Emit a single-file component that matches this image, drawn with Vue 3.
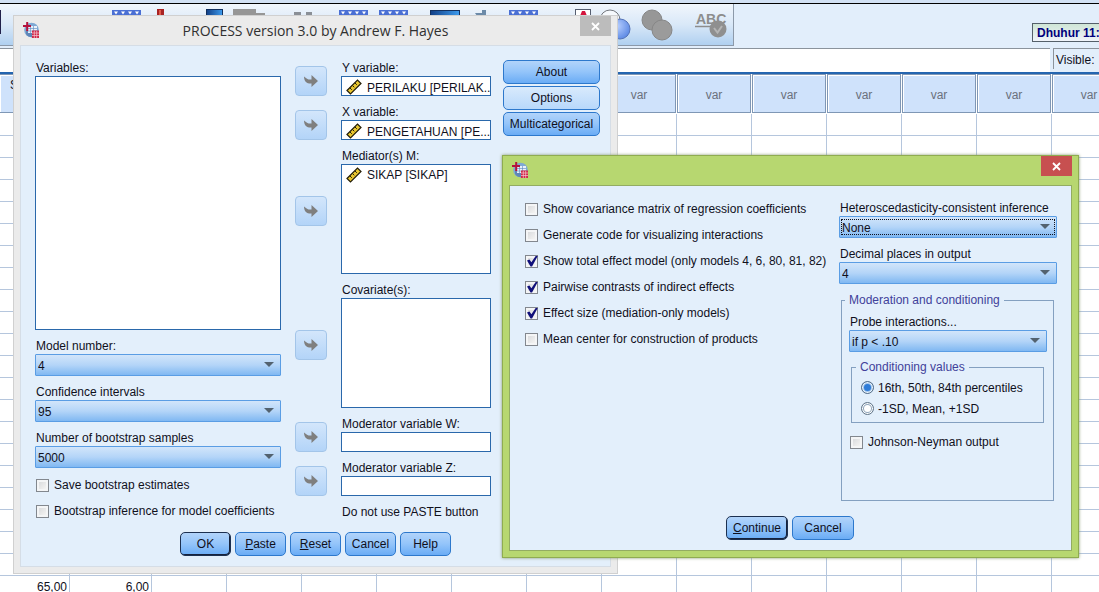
<script setup>
import { reactive, ref } from "vue";

const rowCount = 22;
const varColumns = 13;

const modelNumber = ref("4");
const confidence = ref("95");
const samples = ref("5000");
const hcInference = ref("None");
const decimals = ref("4");
const probe = ref("if p < .10");
const conditioning = ref("percentiles");
const johnsonNeyman = ref(false);

const bootstrap = reactive([
  { id: "save", label: "Save bootstrap estimates", on: false },
  { id: "infer", label: "Bootstrap inference for model coefficients", on: false },
]);

const targets = [
  { id: "y", label: "Y variable:", kind: "field", value: "PERILAKU [PERILAK.." },
  { id: "x", label: "X variable:", kind: "field", value: "PENGETAHUAN [PE..." },
  { id: "m", label: "Mediator(s) M:", kind: "list", items: ["SIKAP [SIKAP]"] },
  { id: "cov", label: "Covariate(s):", kind: "list", items: [] },
  { id: "w", label: "Moderator variable W:", kind: "field", value: "" },
  { id: "z", label: "Moderator variable Z:", kind: "field", value: "" },
];

const options = reactive([
  { id: "cov", label: "Show covariance matrix of regression coefficients", on: false },
  { id: "code", label: "Generate code for visualizing interactions", on: false },
  { id: "total", label: "Show total effect model (only models 4, 6, 80, 81, 82)", on: true },
  { id: "pair", label: "Pairwise contrasts of indirect effects", on: true },
  { id: "effect", label: "Effect size (mediation-only models)", on: true },
  { id: "center", label: "Mean center for construction of products", on: false },
]);
</script>

<template>
  <div class="editor">
    <svg width="0" height="0" class="defs" aria-hidden="true">
      <defs>
        <linearGradient id="blueFill" x1="0" y1="0" x2="1" y2="0">
          <stop offset="0" stop-color="#123f86" />
          <stop offset="1" stop-color="#3d9bee" />
        </linearGradient>
        <radialGradient id="ballFill" cx="0.35" cy="0.35" r="0.8">
          <stop offset="0" stop-color="#b9d0ff" />
          <stop offset="1" stop-color="#4f7fe0" />
        </radialGradient>
        <symbol id="spss" viewBox="0 0 16 16">
          <circle cx="8.5" cy="8" r="7.3" fill="#7fa9d4" />
          <path d="M3 12a7.3 7.3 0 0 0 7 3.2V9H3z" fill="#5f86b8" />
          <rect x="5" y="4" width="9" height="7" fill="#e8f1fa" />
          <path d="M5 6.5h9M5 9h9M7.5 4v7M10.5 4v7" stroke="#5b86bd" stroke-width="0.6" />
          <path d="M4.2 0v9M0 4h8" stroke="#b5123c" stroke-width="2" />
          <rect x="9" y="8.5" width="7" height="7.5" fill="#d02747" />
          <path d="M9 11h7M9 13.5h7M11.3 9v7M13.7 9v7" stroke="#f6c8d2" stroke-width="0.7" />
        </symbol>
        <symbol id="ruler" viewBox="0 0 16 16">
          <path d="M1 11.5L11.5 1l3.500 3.500L4.500 15z" fill="#e9c62f" stroke="#221c08" stroke-width="1.2" />
          <path d="M4 9l1.800 1.800M6.500 6.500l1.800 1.800M9 4l1.800 1.800" stroke="#221c08" stroke-width="1" />
        </symbol>
        <symbol id="arrow" viewBox="0 0 14 12">
          <path d="M0 1.5l3 2.200c1.500 1 3 1 4.500.8V0L14 6l-6.500 6V8.500C3.500 8.800.3 7.500 0 1.500z" fill="#7f7f7f" />
        </symbol>
        <symbol id="gridIcon" viewBox="0 0 29 6">
          <rect width="29" height="6" fill="#4a6fd4" />
          <path d="M2 1.5h4l-2 3zM9 1.5h4l-2 3zM16 1.5h4l-2 3zM23 1.5h4l-2 3z" fill="#fff" />
          <path d="M0 5.5h29" stroke="#9db4ea" />
        </symbol>
      </defs>
    </svg>

    <div class="toolbar-row">
      <div class="toolbar">
        <svg width="733" height="41" viewBox="0 4 733 41" aria-hidden="true">
          <rect x="0" y="10" width="1" height="24" fill="#20204a" />
          <use href="#gridIcon" x="112" y="10" width="29" height="6" />
          <rect x="157" y="9" width="7" height="8" fill="#a82323" />
          <rect x="159" y="10" width="2" height="7" fill="#e05a4a" />
          <rect x="206.5" y="9.5" width="16" height="8" fill="url(#blueFill)" stroke="#12305f" />
          <path d="M233 9h23v4h9v5h-32z" fill="#969696" />
          <path d="M294 12h7v5h-7zM306 12h6v5h-6z" fill="#8a8f96" />
          <use href="#gridIcon" x="339" y="10" width="29" height="6" />
          <use href="#gridIcon" x="379" y="10" width="29" height="6" />
          <rect x="430.5" y="10.5" width="29" height="8" fill="url(#blueFill)" stroke="#12305f" />
          <path d="M475 13h7v-3h4v6h-9z" fill="#6c8aa8" />
          <use href="#gridIcon" x="509" y="10" width="29" height="6" />
          <rect x="575.5" y="9.5" width="15" height="10" fill="#fff" stroke="#555e70" />
          <path d="M580 16l2-5h3l2 5" fill="#d4143c" />
          <circle cx="610" cy="20" r="10" fill="#f6f9fd" stroke="#73777d" />
          <circle cx="620" cy="29" r="10" fill="url(#ballFill)" stroke="#5473b8" />
          <circle cx="652" cy="20" r="10" fill="#979797" stroke="#878787" />
          <circle cx="662" cy="30" r="10" fill="#9b9b9b" stroke="#878787" />
          <text x="696" y="24" class="abc">ABC</text>
          <path d="M695 26.5h20" stroke="#8d8d8d" stroke-width="1.5" />
          <circle cx="718" cy="29" r="8.5" fill="#8f8f8f" />
          <path d="M714 28l3.5 4.5L722 26" fill="none" stroke="#b4b4b4" stroke-width="2" />
        </svg>
      </div>
      <div class="prayer">Dhuhur 11:4</div>
    </div>

    <div class="cell-row">
      <div class="cell-editor"></div>
      <div class="visible">Visible:</div>
    </div>

    <table class="sheet">
      <colgroup>
        <col class="col-first" />
        <col class="col-second" />
        <col v-for="n in varColumns" :key="n" class="col-var" />
      </colgroup>
      <thead>
        <tr>
          <th><div class="head head--named">S</div></th>
          <th><div class="head"></div></th>
          <th v-for="n in varColumns" :key="n"><div class="head">var</div></th>
        </tr>
      </thead>
      <tbody>
        <tr v-for="r in rowCount" :key="r">
          <td>{{ r === rowCount ? "65,00" : "" }}</td>
          <td>{{ r === rowCount ? "6,00" : "" }}</td>
          <td v-for="n in varColumns" :key="n"></td>
        </tr>
      </tbody>
    </table>

    <section class="window window--process" aria-label="PROCESS version 3.0 by Andrew F. Hayes">
      <header class="titlebar">
        <svg class="app-icon" width="16" height="16"><use href="#spss" /></svg>
        <h1 class="title">PROCESS version 3.0 by Andrew F. Hayes</h1>
        <button class="close" type="button" aria-label="Close">
          <svg width="9" height="9" viewBox="0 0 9 9"><path d="M1 1l7 7M8 1L1 8" stroke="#fff" stroke-width="1.8" /></svg>
        </button>
      </header>
      <div class="body">
        <div class="columns">
          <div class="stack stack--left">
            <div class="group">
              <span id="vars-label" class="label">Variables:</span>
              <ul class="list list--tall" aria-labelledby="vars-label"></ul>
            </div>
            <div class="group">
              <label class="label" for="model">Model number:</label>
              <div class="combo">
                <select id="model" v-model="modelNumber"><option>4</option></select>
              </div>
            </div>
            <div class="group">
              <label class="label" for="conf">Confidence intervals</label>
              <div class="combo">
                <select id="conf" v-model="confidence"><option>95</option></select>
              </div>
            </div>
            <div class="group">
              <label class="label" for="samples">Number of bootstrap samples</label>
              <div class="combo">
                <select id="samples" v-model="samples"><option>5000</option></select>
              </div>
            </div>
            <label v-for="b in bootstrap" :key="b.id" class="check">
              <input v-model="b.on" type="checkbox" />
              <span>{{ b.label }}</span>
            </label>
          </div>

          <div class="stack stack--targets">
            <div v-for="t in targets" :key="t.id" class="target" :class="`target--${t.kind}`">
              <button class="move" type="button" :aria-label="`Move to ${t.label}`">
                <svg width="14" height="12"><use href="#arrow" /></svg>
              </button>
              <div class="group group--grow">
                <label class="label" :for="`target-${t.id}`">{{ t.label }}</label>
                <div v-if="t.kind === 'field'" class="field">
                  <svg v-if="t.value" width="16" height="16"><use href="#ruler" /></svg>
                  <input :id="`target-${t.id}`" type="text" :value="t.value" readonly />
                </div>
                <ul v-else :id="`target-${t.id}`" class="list">
                  <li v-for="item in t.items" :key="item">
                    <svg width="16" height="16"><use href="#ruler" /></svg>
                    <span>{{ item }}</span>
                  </li>
                </ul>
              </div>
            </div>
            <p class="note">Do not use PASTE button</p>
          </div>

          <div class="side">
            <button class="btn" type="button">About</button>
            <button class="btn btn--hover" type="button">Options</button>
            <button class="btn" type="button">Multicategorical</button>
          </div>
        </div>
        <div class="actions">
          <button class="btn btn--default" type="button">OK</button>
          <button class="btn" type="button"><u>P</u>aste</button>
          <button class="btn" type="button"><u>R</u>eset</button>
          <button class="btn" type="button">Cancel</button>
          <button class="btn" type="button">Help</button>
        </div>
      </div>
    </section>

    <section class="window window--options" aria-label="Options">
      <header class="titlebar">
        <svg class="app-icon" width="16" height="16"><use href="#spss" /></svg>
        <span class="title"></span>
        <button class="close" type="button" aria-label="Close">
          <svg width="9" height="9" viewBox="0 0 9 9"><path d="M1 1l7 7M8 1L1 8" stroke="#fff" stroke-width="1.8" /></svg>
        </button>
      </header>
      <div class="body">
        <div class="columns columns--options">
          <div class="stack">
            <label v-for="o in options" :key="o.id" class="check">
              <input v-model="o.on" type="checkbox" />
              <span>{{ o.label }}</span>
            </label>
          </div>
          <div class="stack stack--settings">
            <div class="group">
              <label class="label" for="hc">Heteroscedasticity-consistent inference</label>
              <div class="combo combo--focus">
                <select id="hc" v-model="hcInference"><option>None</option></select>
              </div>
            </div>
            <div class="group">
              <label class="label" for="decimals">Decimal places in output</label>
              <div class="combo">
                <select id="decimals" v-model="decimals"><option>4</option></select>
              </div>
            </div>
            <fieldset class="frame">
              <legend>Moderation and conditioning</legend>
              <div class="group">
                <label class="label" for="probe">Probe interactions...</label>
                <div class="combo">
                  <select id="probe" v-model="probe"><option>if p &lt; .10</option></select>
                </div>
              </div>
              <fieldset class="frame frame--inner">
                <legend>Conditioning values</legend>
                <label class="check">
                  <input v-model="conditioning" type="radio" name="conditioning" value="percentiles" />
                  <span>16th, 50th, 84th percentiles</span>
                </label>
                <label class="check">
                  <input v-model="conditioning" type="radio" name="conditioning" value="sd" />
                  <span>-1SD, Mean, +1SD</span>
                </label>
              </fieldset>
              <label class="check">
                <input v-model="johnsonNeyman" type="checkbox" />
                <span>Johnson-Neyman output</span>
              </label>
            </fieldset>
          </div>
        </div>
        <div class="actions actions--wide">
          <button class="btn btn--default" type="button"><u>C</u>ontinue</button>
          <button class="btn" type="button">Cancel</button>
        </div>
      </div>
    </section>
  </div>
</template>

<style>
body {
  margin: 0;
  overflow: hidden;
}
</style>

<style scoped>
.editor,
.editor * {
  box-sizing: border-box;
}
.editor {
  position: relative;
  height: 100vh;
  overflow: hidden;
  background: #e2eefb;
  border-top: 3px solid #d2e1f4;
  color: #10101c;
  font: 12px/16px "Liberation Sans", Arial, sans-serif;
}
.defs {
  position: absolute;
}
.editor svg {
  flex: none;
}
.editor button,
.editor input,
.editor select {
  margin: 0;
  font: inherit;
  color: inherit;
}

/* data editor behind the dialogs */
.toolbar-row {
  display: flex;
  align-items: flex-start;
  justify-content: space-between;
  height: 45px;
  border-top: 1px solid #000;
}
.toolbar {
  height: 42px;
  overflow: hidden;
  border-right: 1px solid #8c99a9;
  border-bottom: 1px solid #8c99a9;
  background: linear-gradient(#f1f6fc, #d9e8f8 50%, #b0d0f0);
}
.abc {
  font: bold 14px "Liberation Sans", Arial, sans-serif;
  fill: #8d8d8d;
}
.prayer {
  width: 67px;
  height: 19px;
  margin-top: 19px;
  padding-left: 4px;
  overflow: hidden;
  border: 1px solid #55606a;
  border-right: 0;
  background: linear-gradient(#cfe6d6, #f0f4fb);
  color: #00007c;
  font-weight: bold;
  line-height: 19px;
  white-space: nowrap;
}
.cell-row {
  display: flex;
  gap: 3px;
  height: 26px;
  border-bottom: 2px solid #2465b0;
}
.cell-editor {
  flex: 1;
  border-top: 1px solid #8b939c;
  background: #fff;
}
.visible {
  width: 46px;
  height: 21px;
  padding-left: 2px;
  border-top: 1px solid #8b939c;
  border-left: 1px solid #8b939c;
  line-height: 22px;
}
.sheet {
  width: 1127px;
  table-layout: fixed;
  border-collapse: separate;
  border-spacing: 0;
  background: #fff;
}
.col-first {
  width: 70px;
}
.col-second {
  width: 82px;
}
.col-var {
  width: 75px;
}
.sheet th {
  height: 40px;
  padding: 0 1px 1px 0;
  font-weight: normal;
}
.head {
  height: 39px;
  border: 1px solid #7f97b5;
  background: #cfe2fb;
  box-shadow: inset 1px 1px #fff;
  color: #6b717b;
  line-height: 40px;
  text-align: center;
}
.head--named {
  padding-left: 10px;
  border-left: 0;
  color: #10101c;
  line-height: 20px;
  text-align: left;
}
.sheet td {
  height: 22px;
  padding: 0 2px 0 0;
  border-right: 1px solid #b5c6dd;
  border-bottom: 1px solid #b5c6dd;
  text-align: right;
}

/* dialog windows */
.window {
  position: absolute;
  display: flex;
  flex-direction: column;
  padding: 0 6px 6px;
}
.window--process {
  top: 12px;
  left: 13px;
  width: 605px;
  border: 1px solid #d0d0d0;
  background: #ebebeb;
}
.window--options {
  top: 152px;
  left: 502px;
  width: 577px;
  border: 1px solid #8fac50;
  background: #b7d770;
  box-shadow: 0 0 3px #8a9a72;
}
.titlebar {
  display: flex;
  align-items: flex-start;
  height: 29px;
}
.app-icon {
  margin: 6px 0 0 3px;
}
.title {
  flex: 1;
  margin: 0;
  padding-left: 12px;
  color: #303030;
  font: 14px/30px "Open Sans", "Noto Sans", sans-serif;
  text-align: center;
}
.close {
  display: flex;
  align-items: center;
  justify-content: center;
  width: 31px;
  height: 20px;
  padding: 0;
  border: 0;
  background: #bcbcbc;
}
.window--options .close {
  background: #c75050;
}
.body {
  padding: 14px 10px 10px 14px;
  border: 1px solid #d5dde6;
  background: #e3effb;
}
.window--options .body {
  padding-right: 14px;
  border-color: #93ac62;
}
.columns {
  display: flex;
  gap: 12px;
}
.columns--options {
  justify-content: space-between;
}
.stack {
  display: flex;
  flex-direction: column;
  gap: 8px;
}
.stack--left {
  flex: none;
  width: 246px;
}
.stack--targets {
  flex: 1;
  min-width: 0;
}
.stack--settings {
  width: 218px;
}
.group--grow {
  flex: 1;
  min-width: 0;
}
.label {
  display: block;
  height: 16px;
  padding-left: 1px;
  white-space: nowrap;
}
.list {
  height: 110px;
  margin: 0;
  padding: 2px 4px;
  border: 1px solid #2a68ab;
  background: #fff;
  list-style: none;
}
.list--tall {
  height: 254px;
}
.list li {
  display: flex;
  gap: 5px;
}
.target {
  display: flex;
  gap: 14px;
  padding-left: 2px;
}
.target--field {
  align-items: flex-end;
}
.target--list {
  align-items: center;
}
.field {
  display: flex;
  gap: 5px;
  height: 20px;
  padding: 2px 0 0 4px;
  border: 1px solid #2a68ab;
  background: #fff;
}
.editor .field input {
  flex: 1;
  min-width: 0;
  height: 17px;
  padding: 0;
  border: 0;
  outline: 0;
  background: transparent;
}
.move {
  display: flex;
  flex: none;
  align-items: center;
  justify-content: center;
  width: 32px;
  height: 30px;
  padding: 0;
  border: 1px solid #a3c5e9;
  border-radius: 4px;
  background: linear-gradient(#d3e6fb, #b3d4f8);
}
.note {
  margin: 0 0 0 49px;
}
.combo {
  position: relative;
}
.editor .combo select {
  display: block;
  width: 100%;
  height: 22px;
  padding: 2px 2px 0;
  appearance: none;
  border: 1px solid #5a9de4;
  border-radius: 1px;
  outline: 0;
  background: linear-gradient(#d2e5fa, #b4d5f8 50%, #80b8f2);
}
.combo::after {
  content: "";
  position: absolute;
  top: 8px;
  right: 7px;
  border: 5px solid transparent;
  border-top-color: #53626f;
  border-bottom: 0;
  pointer-events: none;
}
.combo--focus::before {
  content: "";
  position: absolute;
  inset: 3px 2px;
  border: 1px dotted #10101c;
  pointer-events: none;
}
.check {
  display: flex;
  align-items: center;
  gap: 5px;
  height: 18px;
  padding-left: 1px;
  white-space: nowrap;
}
.check input {
  position: relative;
  flex: none;
  width: 13px;
  height: 13px;
  appearance: none;
  border: 1px solid #82878e;
  background: linear-gradient(135deg, #d3d5d8, #fbfaf8);
  box-shadow: inset 0 0 0 2px #f4f5f6;
}
.check input[type="checkbox"]:checked::before {
  content: "";
  position: absolute;
  inset: 0 -1px 0 1px;
  background: #10107a;
  clip-path: polygon(0 45%, 22% 36%, 40% 62%, 82% 0, 100% 0, 46% 100%, 32% 100%);
}
.frame {
  min-width: 0;
  height: 209px;
  margin: 0 3px 0 2px;
  padding: 6px 6px 0 7px;
  border: 1px solid #84a0c0;
}
.frame legend {
  height: 16px;
  margin-left: -4px;
  padding: 0 4px;
  color: #41419a;
}
.frame > .check {
  margin-top: 10px;
}
.frame--inner {
  height: 64px;
  margin: 7px 3px 0 2px;
  padding: 2px 8px 0;
}
.frame--inner > .check {
  gap: 4px;
  height: 21px;
  margin: 0;
}
.frame--inner input {
  border-radius: 50%;
  border-color: #5d7287;
  background: #fff;
  box-shadow: inset 0 0 0 1px #fff, inset 0 0 0 2px #8fa5bb;
}
.frame--inner input:checked {
  background: #2f7cd8;
  box-shadow: inset 0 0 0 1px #eaf3fc, inset 0 0 0 2px #9fc4ec;
}
.side {
  display: flex;
  flex: none;
  flex-direction: column;
  gap: 2px;
  width: 97px;
}
.actions {
  display: flex;
  justify-content: center;
  gap: 4px;
  margin: 12px 4px 0 0;
}
.btn {
  height: 24px;
  padding: 0;
  border: 1px solid #2d78cc;
  border-radius: 5px;
  background: linear-gradient(#b2d4fa, #93c4fa 50%, #6aacf5);
  white-space: nowrap;
}
.btn--hover {
  background: linear-gradient(#d9eafc, #b8d8fb);
}
.btn--default {
  border-color: #1c3050;
  box-shadow: inset -1px -1px #16223c;
}
.actions .btn {
  width: 51px;
}
.actions--wide {
  margin: 15px 1px 0 0;
}
.actions--wide .btn {
  width: 62px;
}
</style>
